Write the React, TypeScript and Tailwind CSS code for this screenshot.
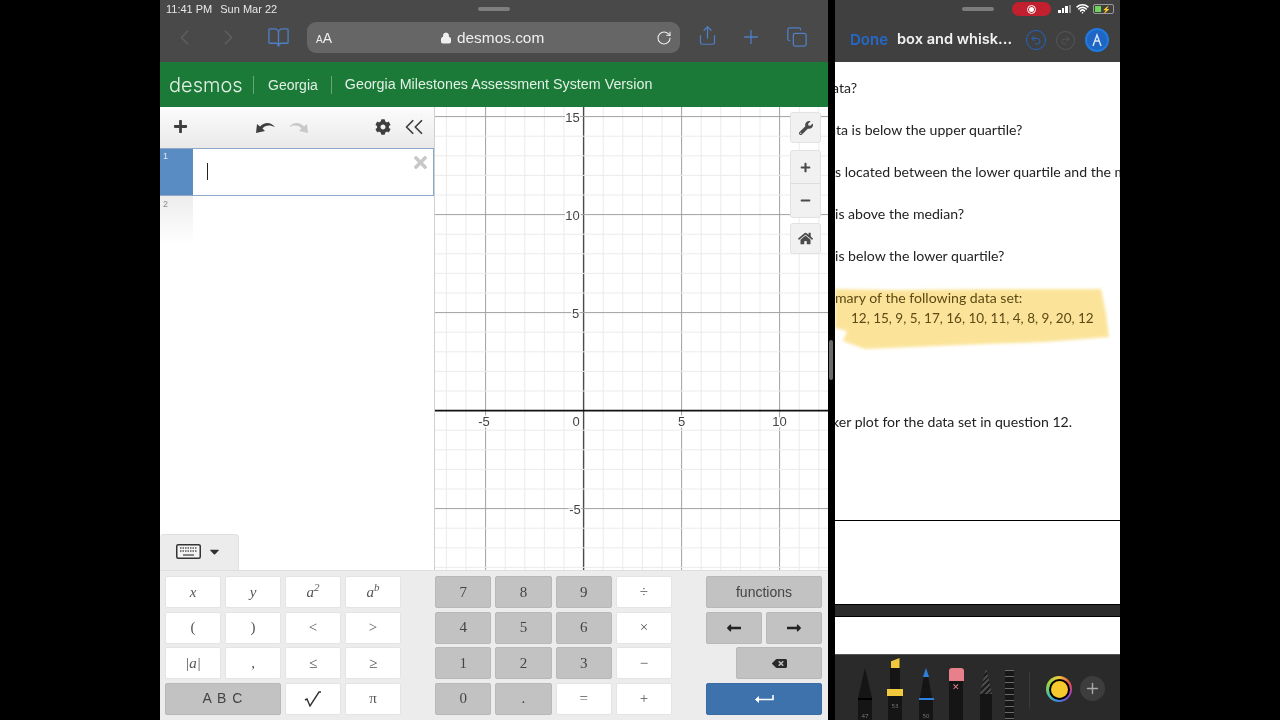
import {
  BookOpen,
  ChevronLeft,
  ChevronRight,
  ChevronsLeft,
  Copy,
  Lock,
  Plus,
  RotateCw,
  Share,
  Undo2,
  Redo2,
  Wifi,
} from "lucide-react";
import {
  FaBackspace,
  FaCaretDown,
  FaCog,
  FaHome,
  FaLongArrowAltLeft,
  FaLongArrowAltRight,
  FaPlus,
  FaMinus,
  FaTimes,
  FaWrench,
} from "react-icons/fa";
import type { ReactNode } from "react";

const UNIT = 19.6;
const W = 393;
const H = 463;
const OX = 148.6;
const OY = 303.6;

function Graph() {
  const xs: number[] = [];
  const ys: number[] = [];
  for (let i = -8; i <= 13; i++) xs.push(i);
  for (let i = -14; i <= 17; i++) ys.push(i);
  return (
    <svg width={W} height={H} className="block" style={{ fontFamily: "Liberation Sans, sans-serif" }}>
      {xs.map((i) => (
        <line
          key={`x${i}`}
          x1={OX + i * UNIT}
          x2={OX + i * UNIT}
          y1={0}
          y2={H}
          stroke={i === 0 ? "#4a4a4a" : i % 5 === 0 ? "#a0a0a0" : "#ebebeb"}
          strokeWidth={i === 0 ? 1.4 : 1}
        />
      ))}
      {ys.map((i) => (
        <line
          key={`y${i}`}
          x1={0}
          x2={W}
          y1={OY - i * UNIT}
          y2={OY - i * UNIT}
          stroke={i === 0 ? "#111111" : i % 5 === 0 ? "#a0a0a0" : "#ebebeb"}
          strokeWidth={i === 0 ? 1.6 : 1}
        />
      ))}
      {[
        ["15", 137.5, 15],
        ["10", 137.5, 113],
        ["5", 140.5, 211],
        ["-5", 49, 319],
        ["0", 141, 319],
        ["5", 246.5, 319],
        ["10", 344.5, 319],
        ["-5", 140, 407],
      ].map(([t, x, y]) => (
        <text
          key={`${t}-${x}-${y}`}
          x={x as number}
          y={y as number}
          textAnchor="middle"
          fontSize="13"
          fill="#444444"
          stroke="#ffffff"
          strokeWidth="3"
          paintOrder="stroke"
        >
          {t}
        </text>
      ))}
    </svg>
  );
}

function Key({ children, kind = "white", className = "" }: { children: ReactNode; kind?: "white" | "gray" | "blue"; className?: string }) {
  const tone =
    kind === "white"
      ? "bg-white border-[#e4e4e4] text-[#555555]"
      : kind === "gray"
        ? "bg-[#c2c2c2] border-[#b8b8b8] text-[#444444]"
        : "bg-[#3d72ad] border-[#3a6ba3] text-white";
  return (
    <div className={`flex h-8 items-center justify-center rounded-[2px] border ${tone} ${className}`}>
      {children}
    </div>
  );
}

const serif = "font-['Liberation_Serif',serif] text-[15px]";
const sans = "font-['Liberation_Sans',sans-serif]";

function Sup({ base, exp }: { base: string; exp: string }) {
  return (
    <span className="italic">
      {base}
      <sup className="text-[11px] leading-none">{exp}</sup>
    </span>
  );
}

function Keypad() {
  return (
    <div className="flex h-[150px] border-t border-[#dedede] bg-[#ececec] pt-[5px] pl-[5px]">
      <div className={`grid w-[236px] grid-cols-4 content-start gap-x-1 gap-y-[3.5px] ${serif}`}>
        <Key><i>x</i></Key>
        <Key><i>y</i></Key>
        <Key><Sup base="a" exp="2" /></Key>
        <Key><Sup base="a" exp="b" /></Key>
        <Key>(</Key>
        <Key>)</Key>
        <Key>&lt;</Key>
        <Key>&gt;</Key>
        <Key><i>|a|</i></Key>
        <Key>,</Key>
        <Key>≤</Key>
        <Key>≥</Key>
        <Key kind="gray" className={`col-span-2 ${sans} text-[14px] tracking-[1px]`}>A B C</Key>
        <Key>
          <svg width="18" height="16" viewBox="0 0 18 16" fill="none" stroke="#333333">
            <path d="M1 9l2-1 3 7L15 1h2" strokeWidth="1.4" />
          </svg>
        </Key>
        <Key>π</Key>
      </div>
      <div className={`ml-[34px] grid w-[237px] grid-cols-4 content-start gap-x-1 gap-y-[3.5px] ${serif}`}>
        <Key kind="gray">7</Key>
        <Key kind="gray">8</Key>
        <Key kind="gray">9</Key>
        <Key>÷</Key>
        <Key kind="gray">4</Key>
        <Key kind="gray">5</Key>
        <Key kind="gray">6</Key>
        <Key>×</Key>
        <Key kind="gray">1</Key>
        <Key kind="gray">2</Key>
        <Key kind="gray">3</Key>
        <Key>−</Key>
        <Key kind="gray">0</Key>
        <Key kind="gray">.</Key>
        <Key>=</Key>
        <Key>+</Key>
      </div>
      <div className="ml-[34px] grid w-[116px] grid-cols-2 content-start gap-x-1 gap-y-[3.5px]">
        <Key kind="gray" className={`col-span-2 ${sans} text-[14px]`}>functions</Key>
        <Key kind="gray"><FaLongArrowAltLeft size={16} color="#222222" /></Key>
        <Key kind="gray"><FaLongArrowAltRight size={16} color="#222222" /></Key>
        <Key kind="gray" className="col-span-2 ml-[30px]"><FaBackspace size={15} color="#2a2a2a" /></Key>
        <Key kind="blue" className="col-span-2">
          <svg width="20" height="10" viewBox="0 0 20 10" fill="none" stroke="#ffffff" strokeWidth="1.6">
            <path d="M19 1v4.5H2" />
            <path d="M5 2.5L1.5 5.5 5 8.5" fill="#ffffff" strokeWidth="1" />
          </svg>
        </Key>
      </div>
    </div>
  );
}

function UndoArrow({ color, flip = false }: { color: string; flip?: boolean }) {
  return (
    <svg width="20" height="12" viewBox="0 0 20 12" className={flip ? "-scale-x-100" : ""}>
      <path d="M0 12L1 3l3 2.5C8 1.5 14 0 19 6c-5-2.5-10-2-12.5 1.5L9 10z" fill={color} />
    </svg>
  );
}

function KeyboardIcon() {
  return (
    <svg width="25" height="15" viewBox="0 0 25 15">
      <rect x="0.75" y="0.75" width="23.5" height="13.5" rx="1.5" fill="#f4f4f4" stroke="#333333" strokeWidth="1.5" />
      <path d="M4 4h17M4 7h17" stroke="#555555" strokeWidth="1.4" strokeDasharray="1.5 1" />
      <path d="M7 11h11" stroke="#555555" strokeWidth="1.4" />
    </svg>
  );
}

function Sidebar() {
  return (
    <div className="flex w-[275px] shrink-0 flex-col border-r border-[#d0d0d0] bg-white">
      <div className="flex h-[41px] items-center bg-gradient-to-b from-[#fcfcfc] to-[#e9e9e9] pb-[2px] text-[#3f3f3f]">
        <FaPlus size={15} className="ml-[13px]" />
        <div className="ml-[68px]"><UndoArrow color="#3f3f3f" /></div>
        <div className="ml-[12px]"><UndoArrow color="#c8c8c8" flip /></div>
        <FaCog size={16} className="ml-[67px]" />
        <ChevronsLeft size={30} strokeWidth={1.4} className="ml-[8px]" />
      </div>
      <div className="flex h-[48px] border border-l-0 border-[#8ba8c9] bg-white">
        <div className={`w-[33px] bg-[#5a8cc4] pl-[3px] pt-[1px] text-[9px] leading-[12px] text-[#dce8f5] ${sans}`}>1</div>
        <div className="relative flex-1">
          <div className="absolute left-[14px] top-[14px] h-[17px] w-px bg-[#222222]" />
          <FaTimes size={19} color="#c8c8c8" className="absolute right-[3px] top-[4px]" />
        </div>
      </div>
      <div className="flex flex-1 flex-col">
        <div className={`h-[48px] w-[33px] bg-gradient-to-b from-[#ededed] to-white pl-[3px] pt-[2px] text-[9px] leading-[12px] text-[#8a8a8a] ${sans}`}>2</div>
      </div>
      <div className="flex h-[36px] w-[79px] items-center justify-center gap-[6px] rounded-t-[4px] border-t border-r border-[#e0e0e0] bg-[#ececec] pb-[2px] text-[#333333]">
        <KeyboardIcon />
        <FaCaretDown size={15} />
      </div>
    </div>
  );
}

function GraphPane() {
  return (
    <div className="relative w-[393px] shrink-0 overflow-hidden bg-white">
      <Graph />
      <div className="absolute left-[355px] top-[5px] flex h-[31px] w-[31px] items-center justify-center rounded-[3px] border border-[#e2e2e2] bg-[#f1f1f1] text-[#4a4a4a]">
        <FaWrench size={14} />
      </div>
      <div className="absolute left-[355px] top-[43px] flex w-[31px] flex-col rounded-[3px] border border-[#e2e2e2] bg-[#f1f1f1] text-[#4a4a4a]">
        <div className="flex h-[33px] items-center justify-center border-b border-[#dddddd]"><FaPlus size={11} /></div>
        <div className="flex h-[33px] items-center justify-center"><FaMinus size={11} /></div>
      </div>
      <div className="absolute left-[355px] top-[116px] flex h-[31px] w-[31px] items-center justify-center rounded-[3px] border border-[#e2e2e2] bg-[#f1f1f1] text-[#4a4a4a]">
        <FaHome size={15} />
      </div>
    </div>
  );
}

function Safari() {
  return (
    <div className="flex w-[668px] shrink-0 flex-col">
      <div className={`h-[62px] bg-[#494949] ${sans}`}>
        <div className="relative flex h-[19px] items-center pl-[6px] text-[11px] text-[#e8e8e8]">
          <span>11:41 PM</span>
          <span className="ml-[8px]">Sun Mar 22</span>
          <div className="absolute left-[318px] top-[7px] h-[4px] w-[32px] rounded-full bg-[#7e7e7e]" />
        </div>
        <div className="flex h-[43px] items-start">
          <ChevronLeft size={25} strokeWidth={1.5} color="#5f5f5f" className="ml-[12px] mt-[6px]" />
          <ChevronRight size={25} strokeWidth={1.5} color="#5f5f5f" className="ml-[19px] mt-[6px]" />
          <BookOpen size={23} strokeWidth={1.4} color="#4f7fc4" className="ml-[26px] mt-[7px]" />
          <div className="ml-[17px] mt-[3px] flex h-[31px] w-[373px] items-center rounded-[9px] bg-[#666666] pl-[9px] pr-[8px] text-[#efefef]">
            <span className="w-[124px] text-[14px] leading-none"><span className="text-[10px]">A</span>A</span>
            <Lock size={12} fill="#efefef" strokeWidth={2} />
            <span className="ml-[5px] pt-[1px] text-[15.4px]">desmos.com</span>
            <RotateCw size={16} strokeWidth={1.6} className="ml-auto" />
          </div>
          <Share size={21} strokeWidth={1.4} color="#4f7fc4" className="ml-[17px] mt-[6px]" />
          <Plus size={22} strokeWidth={1.4} color="#4f7fc4" className="ml-[22px] mt-[7px]" />
          <Copy size={22} strokeWidth={1.4} color="#4f7fc4" className="ml-[24px] mt-[7px]" />
        </div>
      </div>
      <div className={`flex h-[45px] items-center bg-[#1c7a38] pt-[1px] text-[#e2f0e5] ${sans}`}>
        <span className="ml-[9px] w-[72px] font-['Inter',sans-serif] text-[20px] font-light leading-none">desmos</span>
        <div className="ml-[12px] h-[18px] w-px bg-[#6aa67c]" />
        <span className="ml-[14px] text-[14px]">Georgia</span>
        <div className="ml-[13px] h-[18px] w-px bg-[#6aa67c]" />
        <span className="ml-[13px] text-[14.3px]">Georgia Milestones Assessment System Version</span>
      </div>
      <div className="flex h-[463px]">
        <Sidebar />
        <GraphPane />
      </div>
      <Keypad />
    </div>
  );
}

function Notes() {
  const lines = [
    { t: "ata?", off: "ml-[-3px]" },
    { t: "ata is below the upper quartile?", off: "ml-[-6px]" },
    { t: "s located between the lower quartile and the median?", off: "" },
    { t: "is above the median?", off: "" },
    { t: "is below the lower quartile?", off: "" },
  ];
  return (
    <div className="flex w-[285px] shrink-0 flex-col">
      <div className="h-[62px] bg-[#404040]">
        <div className="relative flex h-[22px] items-center">
          <div className="absolute left-[127px] top-[7px] h-[4px] w-[32px] rounded-full bg-[#7c7c7c]" />
          <div className="absolute left-[177px] top-[2px] flex h-[14px] w-[39px] items-center justify-center rounded-full bg-[#c2202e]">
            <div className="flex h-[9px] w-[9px] items-center justify-center rounded-full border border-white">
              <div className="h-[5px] w-[5px] rounded-full bg-white" />
            </div>
          </div>
          <div className="absolute left-[223px] top-[5px] flex items-end gap-px">
            <div className="h-[3px] w-[2.5px] bg-white" />
            <div className="h-[5px] w-[2.5px] bg-white" />
            <div className="h-[7px] w-[2.5px] bg-white" />
            <div className="h-[8px] w-[2.5px] bg-[#8a8a8a]" />
          </div>
          <Wifi size={13} strokeWidth={3} color="#ffffff" className="absolute left-[241px] top-[2px]" />
          <div className="absolute left-[258px] top-[4px] flex h-[10px] w-[21px] items-center rounded-[2px] border border-[#9a9a9a] p-px">
            <div className="h-full w-[6px] bg-[#6fd45a]" />
            <span className="ml-px text-[7px] leading-none text-white">⚡</span>
          </div>
        </div>
        <div className="flex h-[40px] items-center pb-[4px] font-['Inter',sans-serif]">
          <span className="ml-[15px] text-[15px] font-semibold text-[#2468c8]">Done</span>
          <span className="ml-[9px] w-[122px] whitespace-nowrap text-[14.6px] font-semibold text-[#f2f2f2]">box and whisk...</span>
          <div className="ml-[7px] flex h-[20px] w-[20px] items-center justify-center rounded-full border-[1.5px] border-[#1f66c4]">
            <Undo2 size={12} strokeWidth={1.8} color="#2468c8" />
          </div>
          <div className="ml-[10px] flex h-[19px] w-[19px] items-center justify-center rounded-full border-[1.5px] border-[#575757]">
            <Redo2 size={11} strokeWidth={1.8} color="#575757" />
          </div>
          <div className="ml-[10px] flex h-[24px] w-[24px] items-center justify-center rounded-full border-2 border-[#1f7ae0] bg-[#1f66c4]">
            <svg width="14" height="14" viewBox="0 0 14 14" fill="none" stroke="#d8e6f8" strokeWidth="1.4">
              <path d="M3 13L7 2l4 11M5 8h4" />
            </svg>
          </div>
        </div>
      </div>

      <div className="relative h-[459px] overflow-hidden border-b border-black bg-white font-['Lato',sans-serif] text-[14.1px] text-[#222222]">
        <div className="flex flex-col whitespace-nowrap pt-[5px]">
          {lines.map((l) => (
            <div key={l.t} className="flex h-[42px] items-center">
              <span className={l.off}>{l.t}</span>
            </div>
          ))}
          <div className="mt-[10px] flex h-[21px] items-center text-[#5f5220]"><span>mary of the following data set:</span></div>
          <div className="flex h-[21px] items-center pl-[16px] text-[13.5px] text-[#5f5220]">12, 15, 9, 5, 17, 16, 10, 11, 4, 8, 9, 20, 12</div>
          <div className="flex h-[103px] items-end"><span className="ml-[-3px]">ker plot for the data set in question 12.</span></div>
        </div>
        {/* marker highlight */}
        <svg width="285" height="80" className="absolute left-0 top-[221px] mix-blend-multiply blur-[1.5px]">
          <path
            d="M-4 6 L60 7 L170 6 L266 6 L271 30 L274 54 L210 59 L150 61 L30 66 L8 58 L12 48 L-4 44 Z"
            fill="#fbe49a"
          />
        </svg>
      </div>

      <div className="h-[84px] border-b border-black bg-white" />
      <div className="h-[11px] bg-[#2b2b2b]" />
      <div className="h-[38px] border-t border-black bg-white" />
      <div className="flex h-[66px] border-t border-[#555555] bg-[#2a2a2a]">
        <div className="ml-[10px] flex h-full items-end">
          <div className="flex w-[40px] flex-col items-center self-end">
            <div className="h-[30px] w-[14px] bg-[#151515] [clip-path:polygon(50%_0,100%_100%,0_100%)]" />
            <div className="h-[2px] w-[14px] bg-black" />
            <div className="flex h-[20px] w-[14px] justify-center bg-[#151515] pt-[13px] text-[6px] leading-none text-[#777777]">47</div>
          </div>
          <div className="-ml-[10px] flex w-[40px] flex-col items-center self-end">
            <div className="h-[10px] w-[9px] bg-[#f2c93c] [clip-path:polygon(0_35%,100%_0,100%_100%,0_100%)]" />
            <div className="h-[21px] w-[10px] bg-[#151515]" />
            <div className="h-[7px] w-[16px] bg-[#f2c93c]" />
            <div className="flex h-[24px] w-[14px] justify-center bg-[#151515] pt-[7px] text-[6px] leading-none text-[#777777]">53</div>
          </div>
          <div className="-ml-[9px] flex w-[40px] flex-col items-center self-end">
            <div className="h-[9px] w-[6px] bg-[#2f7fe0] [clip-path:polygon(50%_0,100%_100%,0_100%)]" />
            <div className="h-[21px] w-[12px] bg-[#151515] [clip-path:polygon(30%_0,70%_0,100%_100%,0_100%)]" />
            <div className="h-[2px] w-[15px] bg-[#2f7fe0]" />
            <div className="flex h-[20px] w-[14px] justify-center bg-[#151515] pt-[13px] text-[6px] leading-none text-[#777777]">50</div>
          </div>
          <div className="-ml-[10px] flex w-[40px] flex-col items-center self-end">
            <div className="h-[13px] w-[15px] rounded-t-[3px] bg-[#e8808c]" />
            <div className="flex h-[39px] w-[14px] justify-center bg-[#151515] text-[9px] leading-[12px] text-[#e8808c]">✕</div>
          </div>
          <div className="-ml-[10px] flex w-[40px] flex-col items-center self-end">
            <div className="h-[24px] w-[12px] bg-[repeating-linear-gradient(135deg,#4a4a4a_0_2px,#1c1c1c_2px_4px)] [clip-path:polygon(45%_0,55%_0,100%_100%,0_100%)]" />
            <div className="h-[26px] w-[12px] bg-[#151515]" />
          </div>
          <div className="-ml-[15px] flex w-[36px] justify-center self-end">
            <div className="h-[50px] w-[9px] bg-[#171717] bg-[repeating-linear-gradient(180deg,#6a6a6a_0_1px,transparent_1px_6px)]" />
          </div>
        </div>
        <div className="ml-[2px] mt-[17px] h-[36px] w-px bg-[#3a3a3a]" />
        <div className="ml-[16px] mt-[21px] flex h-[26px] w-[26px] items-center justify-center rounded-full bg-[conic-gradient(#f2c93c,#e2504a,#a33fd0,#3a7fe0,#4fc3a0,#9fd640,#f2c93c)]">
          <div className="flex h-[21px] w-[21px] items-center justify-center rounded-full bg-black">
            <div className="h-[17px] w-[17px] rounded-full bg-[#f6c92c]" />
          </div>
        </div>
        <div className="ml-[8px] mt-[21px] flex h-[25px] w-[25px] items-center justify-center rounded-full bg-[#3d3d3d]">
          <Plus size={17} strokeWidth={2} color="#a8a8a8" />
        </div>
      </div>
    </div>
  );
}

export default function App() {
  return (
    <div className="flex h-[720px] w-[1280px] justify-center overflow-hidden bg-black">
      <div className="flex w-[960px]">
        <Safari />
        <div className="relative w-[7px] shrink-0 bg-black">
          <div className="absolute left-[1px] top-[340px] h-[40px] w-[4px] rounded-full bg-[#6a6a6a]" />
        </div>
        <Notes />
      </div>
    </div>
  );
}
